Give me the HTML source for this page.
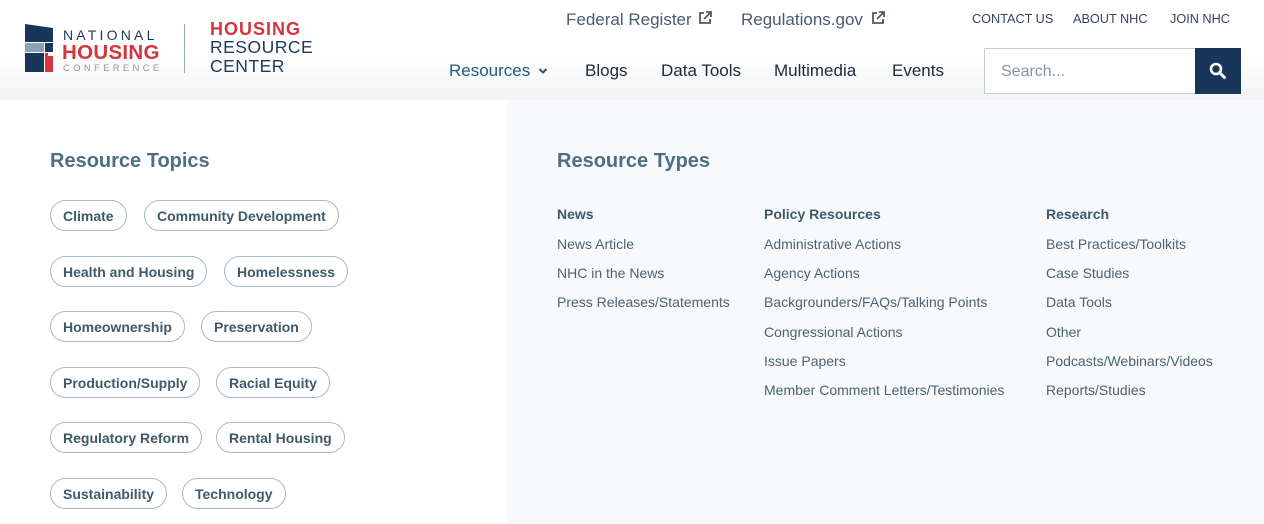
<!DOCTYPE html>
<html><head><meta charset="utf-8"><style>
*{margin:0;padding:0;box-sizing:border-box}
body{width:1264px;height:524px;overflow:hidden;font-family:"Liberation Sans",sans-serif;background:#fff;position:relative;color:#3e5a6b}
.hdr{position:absolute;left:0;top:0;width:1264px;height:100px;background:linear-gradient(#fff 0%,#fff 50%,#f3f4f5 100%)}
.a{position:absolute;white-space:nowrap}
.util{font-size:12.7px;color:#33465a;top:12px}
.ext{font-size:17px;color:#4a5c6c;top:10px}
.nav{font-size:17px;color:#1d2a36;top:61px}
.left{position:absolute;left:0;top:100px;width:507px;height:424px;background:#fff}
.right{position:absolute;left:507px;top:100px;width:757px;height:424px;background:#f7f9fb}
h2{position:absolute;font-size:20px;color:#4d6f84;font-weight:bold;top:150px}
.pill{position:absolute;height:31px;border:1px solid #a9bac6;border-radius:16px;font-size:14px;font-weight:bold;color:#3e5a6b;padding:0 12px;line-height:31px;white-space:nowrap}
.col{position:absolute;top:206px;font-size:14px;color:#4a6475}
.col b{display:block;color:#3e5a6b;margin-bottom:14px}
.col div{height:29.2px}
</style></head><body>
<div class="hdr"></div>
<svg class="a" style="left:25px;top:24px" width="30" height="49" viewBox="0 0 30 49">
<polygon points="0,0 28,4 28,18 0,18" fill="#17365a"/>
<rect x="0" y="19" width="19" height="9" fill="#8ca3b5"/>
<rect x="20" y="19" width="8" height="9" fill="#17365a"/>
<rect x="0" y="29" width="19" height="19" fill="#17365a"/>
<polygon points="20,29 23,29 23,32 28,32 28,48 20,48" fill="#d8363d"/>
</svg>
<div class="a" style="left:63px;top:27px;font-size:14px;letter-spacing:3.2px;color:#1d3a5c">NATIONAL</div>
<div class="a" style="left:62px;top:41px;font-size:20.5px;font-weight:bold;color:#d4353c;letter-spacing:0.3px">HOUSING</div>
<div class="a" style="left:63px;top:63px;font-size:9.5px;letter-spacing:3.3px;color:#8a9aa8">CONFERENCE</div>
<div class="a" style="left:184px;top:24px;width:1px;height:49px;background:#9aa8b4"></div>
<div class="a" style="left:210px;top:19px;font-size:18px;font-weight:bold;color:#d4353c;letter-spacing:1px">HOUSING</div>
<div class="a" style="left:210px;top:38px;font-size:17.5px;color:#1d3a5c;letter-spacing:0.5px;line-height:19px">RESOURCE<br>CENTER</div>
<div class="a ext" style="left:566px">Federal Register</div>
<svg class="a" style="left:698px;top:11px" width="14" height="14" viewBox="0 0 14 14"><path d="M6 2H2v10h10V8" fill="none" stroke="#4a5c6c" stroke-width="1.8"/><path d="M8 1h5v5M13 1L6 8" fill="none" stroke="#4a5c6c" stroke-width="1.8"/></svg>
<div class="a ext" style="left:741px">Regulations.gov</div>
<svg class="a" style="left:871px;top:11px" width="14" height="14" viewBox="0 0 14 14"><path d="M6 2H2v10h10V8" fill="none" stroke="#4a5c6c" stroke-width="1.8"/><path d="M8 1h5v5M13 1L6 8" fill="none" stroke="#4a5c6c" stroke-width="1.8"/></svg>
<div class="a util" style="left:972px">CONTACT US</div>
<div class="a util" style="left:1073px">ABOUT NHC</div>
<div class="a util" style="left:1170px">JOIN NHC</div>
<div class="a nav" style="left:449px;color:#1f5a86">Resources</div>
<svg class="a" style="left:538px;top:67px" width="10" height="8" viewBox="0 0 10 8"><path d="M1.5 2L5 5.5 8.5 2" fill="none" stroke="#1f5a86" stroke-width="2"/></svg>
<div class="a nav" style="left:585px">Blogs</div>
<div class="a nav" style="left:661px">Data Tools</div>
<div class="a nav" style="left:774px">Multimedia</div>
<div class="a nav" style="left:892px">Events</div>
<div class="a" style="left:984px;top:48px;width:212px;height:46px;border:1px solid #c5ccd2;background:#fff;font-size:16px;color:#8a949c;padding:14px 0 0 16px">Search...</div>
<div class="a" style="left:1195px;top:48px;width:46px;height:46px;background:#17365a"></div>
<svg class="a" style="left:1209px;top:62px" width="18" height="18" viewBox="0 0 18 18"><circle cx="7" cy="7" r="5" fill="none" stroke="#fff" stroke-width="2.6"/><line x1="10.5" y1="10.5" x2="15.5" y2="15.5" stroke="#fff" stroke-width="3" stroke-linecap="round"/></svg>
<div class="left"></div><div class="right"></div>
<h2 style="left:50px">Resource Topics</h2>
<h2 style="left:557px">Resource Types</h2>
<div class="pill" style="left:50px;top:200px">Climate</div>
<div class="pill" style="left:144px;top:200px">Community Development</div>
<div class="pill" style="left:50px;top:256px">Health and Housing</div>
<div class="pill" style="left:224px;top:256px">Homelessness</div>
<div class="pill" style="left:50px;top:311px">Homeownership</div>
<div class="pill" style="left:201px;top:311px">Preservation</div>
<div class="pill" style="left:50px;top:367px">Production/Supply</div>
<div class="pill" style="left:216px;top:367px">Racial Equity</div>
<div class="pill" style="left:50px;top:422px">Regulatory Reform</div>
<div class="pill" style="left:216px;top:422px">Rental Housing</div>
<div class="pill" style="left:50px;top:478px">Sustainability</div>
<div class="pill" style="left:182px;top:478px">Technology</div>
<div class="col" style="left:557px"><b>News</b><div>News Article</div><div>NHC in the News</div><div>Press Releases/Statements</div></div>
<div class="col" style="left:764px"><b>Policy Resources</b><div>Administrative Actions</div><div>Agency Actions</div><div>Backgrounders/FAQs/Talking Points</div><div>Congressional Actions</div><div>Issue Papers</div><div>Member Comment Letters/Testimonies</div></div>
<div class="col" style="left:1046px"><b>Research</b><div>Best Practices/Toolkits</div><div>Case Studies</div><div>Data Tools</div><div>Other</div><div>Podcasts/Webinars/Videos</div><div>Reports/Studies</div></div>
</body></html>
